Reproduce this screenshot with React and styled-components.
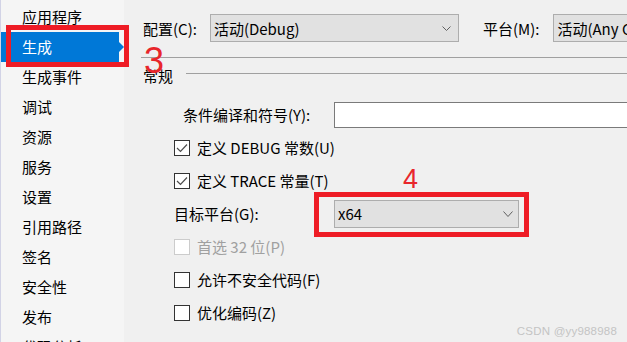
import React from "react";
import styled, { createGlobalStyle } from "styled-components";

const GlobalStyle = createGlobalStyle`
  html, body {
    margin: 0;
    padding: 0;
    overflow: hidden;
  }
  body {
    font-family: "Noto Sans CJK SC", sans-serif;
    font-size: 15px;
    color: #000;
  }
`;

const navItems = [
  "应用程序",
  "生成",
  "生成事件",
  "调试",
  "资源",
  "服务",
  "设置",
  "引用路径",
  "签名",
  "安全性",
  "发布",
  "代码分析",
];

const Chevron = ({ w = 9, h = 5 }) => (
  <svg width={w} height={h} viewBox={`0 0 ${w} ${h}`}>
    <polyline
      points={`0.5,0.5 ${w / 2},${h - 0.5} ${w - 0.5},0.5`}
      fill="none"
      stroke="#606060"
      strokeWidth="1"
    />
  </svg>
);

const Check = () => (
  <svg width="12" height="10" viewBox="0 0 12 10">
    <polyline
      points="1,5 4.5,8.5 11,1.5"
      fill="none"
      stroke="#4d4d4d"
      strokeWidth="1.2"
    />
  </svg>
);

const App = () => {
  return (
    <Page>
      <GlobalStyle />
      <Sidebar>
        {navItems.map((item) => (
          <NavItem key={item} $active={item === "生成"}>
            {item}
            {item === "生成" && <MarkBox $left={5} $top={-7} $w={123} $h={42} />}
          </NavItem>
        ))}
      </Sidebar>
      <Content>
        <StepNumber $left={20} $top={43} $size={36}>
          3
        </StepNumber>
        <TopBar>
          <Label $mr={13}>配置(C):</Label>
          <Select $width="249px" $chevronRight={7}>
            <span>活动(Debug)</span>
            <Chevron w={9} h={5} />
          </Select>
          <Label $ml={24} $mr={14}>平台(M):</Label>
          <Select $width="120px">
            <span>活动(Any CPU)</span>
          </Select>
        </TopBar>
        <Divider />
        <SectionHead>
          <span>常规</span>
          <Rule />
        </SectionHead>
        <Form>
          <Row>
            <FieldLabel $indent={59}>条件编译和符号(Y):</FieldLabel>
            <TextBox />
          </Row>
          <Row>
            <CheckLine $indent={50}>
              <Box>
                <Check />
              </Box>
              定义 DEBUG 常数(U)
            </CheckLine>
          </Row>
          <Row>
            <CheckLine $indent={50}>
              <Box>
                <Check />
              </Box>
              定义 TRACE 常量(T)
            </CheckLine>
          </Row>
          <Row>
            <FieldLabel $indent={50}>目标平台(G):</FieldLabel>
            <FieldWrap>
              <Select $width="185px" $chevronRight={5}>
                <span>x64</span>
                <Chevron w={10} h={6} />
              </Select>
              <MarkBox $left={-20} $top={-8} $w={215} $h={45} />
              <StepNumber $left={69} $top={-34} $size={27}>
                4
              </StepNumber>
            </FieldWrap>
          </Row>
          <Row>
            <CheckLine $indent={50} $disabled>
              <Box $disabled />
              首选 32 位(P)
            </CheckLine>
          </Row>
          <Row>
            <CheckLine $indent={50}>
              <Box />
              允许不安全代码(F)
            </CheckLine>
          </Row>
          <Row>
            <CheckLine $indent={50}>
              <Box />
              优化编码(Z)
            </CheckLine>
          </Row>
        </Form>
        <Watermark>CSDN @yy988988</Watermark>
      </Content>
    </Page>
  );
};

export default App;

const Page = styled.div`
  display: flex;
  width: 627px;
  height: 342px;
  overflow: hidden;
  background: #f0f0f0;
  position: relative;
`;

const Sidebar = styled.nav`
  flex: 0 0 124px;
  box-sizing: border-box;
  padding-top: 2px;
  background: #f5f5f5;
  border-left: 1px solid #d2d3e6;
  position: relative;
  z-index: 2;
`;

const NavItem = styled.div`
  position: relative;
  height: 30px;
  line-height: 30px;
  padding-left: 21px;
  margin-right: ${(p) => (p.$active ? "5px" : "0")};
  background: ${(p) => (p.$active ? "#0078d7" : "transparent")};
  color: ${(p) => (p.$active ? "#fff" : "#000")};
  white-space: nowrap;
  &::after {
    content: "";
    display: ${(p) => (p.$active ? "block" : "none")};
    position: absolute;
    right: -5px;
    top: 10px;
    border-top: 5px solid transparent;
    border-bottom: 5px solid transparent;
    border-left: 5px solid #0078d7;
  }
`;

const MarkBox = styled.div`
  position: absolute;
  left: ${(p) => p.$left}px;
  top: ${(p) => p.$top}px;
  width: ${(p) => p.$w}px;
  height: ${(p) => p.$h}px;
  box-sizing: border-box;
  border: 5px solid #ee1c25;
  pointer-events: none;
  z-index: 3;
`;

const StepNumber = styled.div`
  position: absolute;
  left: ${(p) => p.$left}px;
  top: ${(p) => p.$top}px;
  font-family: "Liberation Sans", sans-serif;
  font-size: ${(p) => p.$size}px;
  line-height: 1;
  color: #e8262b;
  z-index: 3;
`;

const Content = styled.main`
  position: relative;
  flex: 1;
  min-width: 0;
  padding-top: 14px;
`;

const TopBar = styled.div`
  display: flex;
  align-items: center;
  height: 28px;
  padding-left: 19px;
  white-space: nowrap;
`;

const Label = styled.span`
  margin-left: ${(p) => p.$ml || 0}px;
  margin-right: ${(p) => p.$mr || 10}px;
`;

const Select = styled.div`
  display: flex;
  align-items: center;
  justify-content: space-between;
  box-sizing: border-box;
  flex: 0 0 ${(p) => p.$width};
  width: ${(p) => p.$width};
  height: 28px;
  padding: 0 ${(p) => p.$chevronRight || 4}px 0 3px;
  background: #e1e1e1;
  border: 1px solid #adadad;
  white-space: nowrap;
  overflow: hidden;
`;

const Divider = styled.div`
  margin: 15px 0 0 17px;
  height: 1px;
  background: #a0a0a0;
`;

const SectionHead = styled.div`
  display: flex;
  height: 20px;
  line-height: 20px;
  margin-top: 8px;
  padding-left: 19px;
`;

const Rule = styled.div`
  flex: 1;
  height: 1px;
  margin: 7px 0 0 13px;
  background: #a0a0a0;
`;

const Form = styled.div`
  margin-top: 12px;
`;

const Row = styled.div`
  display: grid;
  grid-template-columns: 210px 1fr;
  align-items: center;
  height: 33px;
`;

const FieldLabel = styled.span`
  padding-left: ${(p) => p.$indent}px;
  white-space: nowrap;
`;

const TextBox = styled.div`
  box-sizing: border-box;
  width: calc(100% + 20px);
  height: 26px;
  background: #fff;
  border: 1px solid #7a7a7a;
`;

const FieldWrap = styled.div`
  position: relative;
`;

const CheckLine = styled.label`
  grid-column: 1 / span 2;
  display: flex;
  align-items: center;
  gap: 7px;
  padding-left: ${(p) => p.$indent}px;
  color: ${(p) => (p.$disabled ? "#a0a0a0" : "#000")};
  white-space: nowrap;
`;

const Box = styled.span`
  display: flex;
  align-items: center;
  justify-content: center;
  box-sizing: border-box;
  width: 16px;
  height: 16px;
  background: #fff;
  border: 1px solid ${(p) => (p.$disabled ? "#cccccc" : "#333333")};
`;

const Watermark = styled.div`
  position: absolute;
  right: 10px;
  bottom: 5px;
  font-family: "Liberation Sans", sans-serif;
  font-size: 11.5px;
  color: #c4c4c4;
  letter-spacing: 0.2px;
`;
